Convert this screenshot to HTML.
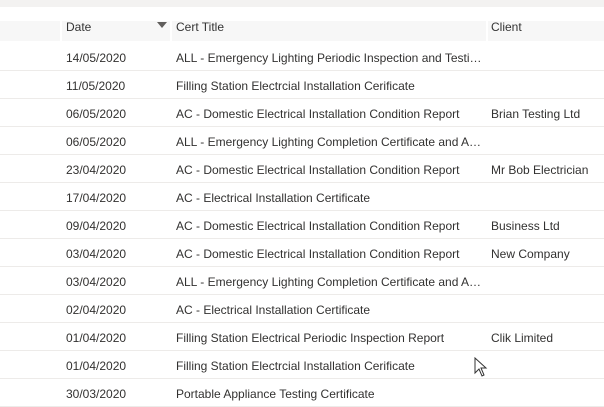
<!DOCTYPE html><html><head><style>
body{margin:0;width:604px;height:400px;overflow:hidden;background:#fff;font-family:"Liberation Sans",sans-serif;font-size:12px;color:#323130;position:relative}
.top{position:absolute;left:0;top:0;width:604px;height:7px;background:#f3f2f1}
.hdr{position:absolute;top:21px;height:20px;background:#f7f7f7}
.ht{position:absolute;top:20px;font-weight:normal;color:#333;font-size:12px}
.row{position:absolute;left:0;width:604px;height:28px;border-bottom:1px solid #edebe9;box-sizing:border-box}
.row span{position:absolute;top:8px;white-space:nowrap}
.c1{left:66px}.c2{left:176px;width:306px;overflow:hidden;text-overflow:ellipsis}.c3{left:491px}
</style></head><body>
<div class="top"></div>
<div class="hdr" style="left:0;width:60px"></div>
<div class="hdr" style="left:62px;width:108px"></div>
<div class="hdr" style="left:172px;width:314px"></div>
<div class="hdr" style="left:488px;width:116px"></div>
<div class="ht" style="left:66px">Date</div>
<svg style="position:absolute;left:157px;top:22px" width="11" height="7"><path d="M0 0H10L5 6Z" fill="#605e5c"/></svg>
<div class="ht" style="left:176px">Cert Title</div>
<div class="ht" style="left:491px">Client</div>
<div class="row" style="top:43px"><span class="c1">14/05/2020</span><span class="c2">ALL - Emergency Lighting Periodic Inspection and Testing Certificate</span></div>
<div class="row" style="top:71px"><span class="c1">11/05/2020</span><span class="c2">Filling Station Electrcial Installation Cerificate</span></div>
<div class="row" style="top:99px"><span class="c1">06/05/2020</span><span class="c2">AC - Domestic Electrical Installation Condition Report</span><span class="c3">Brian Testing Ltd</span></div>
<div class="row" style="top:127px"><span class="c1">06/05/2020</span><span class="c2">ALL - Emergency Lighting Completion Certificate and Assessment</span></div>
<div class="row" style="top:155px"><span class="c1">23/04/2020</span><span class="c2">AC - Domestic Electrical Installation Condition Report</span><span class="c3">Mr Bob Electrician</span></div>
<div class="row" style="top:183px"><span class="c1">17/04/2020</span><span class="c2">AC - Electrical Installation Certificate</span></div>
<div class="row" style="top:211px"><span class="c1">09/04/2020</span><span class="c2">AC - Domestic Electrical Installation Condition Report</span><span class="c3">Business Ltd</span></div>
<div class="row" style="top:239px"><span class="c1">03/04/2020</span><span class="c2">AC - Domestic Electrical Installation Condition Report</span><span class="c3">New Company</span></div>
<div class="row" style="top:267px"><span class="c1">03/04/2020</span><span class="c2">ALL - Emergency Lighting Completion Certificate and Assessment</span></div>
<div class="row" style="top:295px"><span class="c1">02/04/2020</span><span class="c2">AC - Electrical Installation Certificate</span></div>
<div class="row" style="top:323px"><span class="c1">01/04/2020</span><span class="c2">Filling Station Electrical Periodic Inspection Report</span><span class="c3">Clik Limited</span></div>
<div class="row" style="top:351px"><span class="c1">01/04/2020</span><span class="c2">Filling Station Electrcial Installation Cerificate</span></div>
<div class="row" style="top:379px"><span class="c1">30/03/2020</span><span class="c2">Portable Appliance Testing Certificate</span></div>
<svg style="position:absolute;left:474px;top:357px" width="14" height="20"><path d="M1 1V16L5 12L8 19L10 18L7 11H12Z" fill="#fff" stroke="#333" stroke-width="1"/></svg>
</body></html>
